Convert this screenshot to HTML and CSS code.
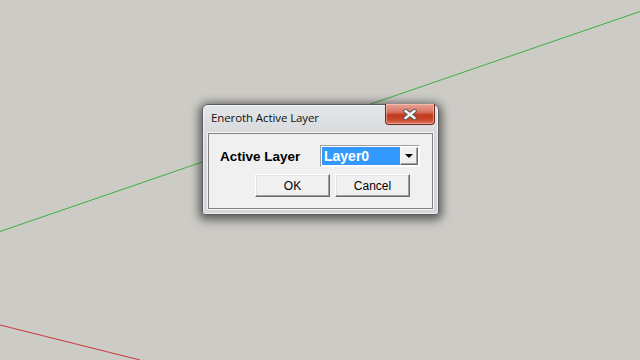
FILE: index.html
```html
<!DOCTYPE html>
<html>
<head>
<meta charset="utf-8">
<link rel="stylesheet" href="styles.css">
</head>
<body>
<div class="canvas">
  <svg class="axes" width="640" height="360" viewBox="0 0 640 360">
    <line x1="0" y1="231.5" x2="640" y2="11.5" stroke="#3fb03f" stroke-width="1"/>
    <line x1="0" y1="325" x2="140" y2="360" stroke="#c8383c" stroke-width="1"/>
  </svg>
  <div class="dialog">
    <div class="titlebar">
      <span class="title">Eneroth Active Layer</span>
      <div class="close">
        <svg width="16" height="11" viewBox="0 0 16 11">
          <path d="M3.5 2 L12.5 9 M12.5 2 L3.5 9" stroke="#505050" stroke-width="4.4" stroke-linecap="round"/>
          <path d="M3.5 2 L12.5 9 M12.5 2 L3.5 9" stroke="#f4f4f4" stroke-width="2.6" stroke-linecap="round"/>
        </svg>
      </div>
    </div>
    <div class="client">
      <div class="row">
        <span class="label">Active Layer</span>
        <div class="combo">
          <span class="combo-value">Layer0</span>
          <span class="combo-btn">
            <svg width="8" height="4" viewBox="0 0 8 4"><path d="M0 0 H8 L4 4 Z" fill="#000"/></svg>
          </span>
        </div>
      </div>
      <div class="buttons">
        <div class="btn">OK</div>
        <div class="btn">Cancel</div>
      </div>
    </div>
  </div>
</div>
</body>
</html>
```
FILE: styles.css
```css
html, body {
  margin: 0;
  padding: 0;
}
body {
  width: 640px;
  height: 360px;
  overflow: hidden;
  background: #cdcdc8;
  font-family: "Liberation Sans", Arial, sans-serif;
}
.canvas {
  position: relative;
  width: 640px;
  height: 360px;
  background: #cccbc6;
}
.axes {
  position: absolute;
  left: 0;
  top: 0;
}
.dialog {
  position: absolute;
  left: 202px;
  top: 104px;
  width: 235px;
  height: 109px;
  border: 1px solid #5a5d60;
  border-radius: 6px 6px 3px 3px;
  background: linear-gradient(#e4e6e9, #d6d8da 30%, #d4d6d8);
  box-shadow: 0 2px 10px 3px rgba(0,0,0,0.55), inset 0 0 0 1px rgba(255,255,255,0.6);
  display: flex;
  flex-direction: column;
}
.titlebar {
  height: 28px;
  display: flex;
  align-items: flex-start;
  position: relative;
}
.title {
  font-family: "Open Sans", "Noto Sans", sans-serif;
  font-size: 11.5px;
  color: #101010;
  margin-left: 8px;
  margin-top: 5px;
  letter-spacing: -0.1px;
}
.close {
  position: absolute;
  right: 3px;
  top: -1px;
  width: 50px;
  height: 21px;
  box-sizing: border-box;
  border: 1px solid #6d2a20;
  border-top: none;
  border-radius: 0 0 4px 4px;
  background: linear-gradient(#e7a497 0%, #d8735f 40%, #c0391e 55%, #c9492c 80%, #de7b5e 100%);
  box-shadow: inset 0 0 0 1px rgba(255,210,200,0.5);
  display: flex;
  align-items: center;
  justify-content: center;
}
.client {
  margin-left: 5px;
  width: 225px;
  height: 76px;
  box-sizing: border-box;
  border: 1px solid #838383;
  background: #f0f0f0;
  box-shadow: 0 0 0 1px #f4f4f4;
  display: flex;
  flex-direction: column;
}
.row {
  display: flex;
  align-items: center;
  margin-top: 11px;
  height: 22px;
}
.label {
  width: 111px;
  padding-left: 11px;
  box-sizing: border-box;
  font-weight: bold;
  font-size: 13.5px;
  color: #000;
}
.combo {
  width: 100px;
  height: 22px;
  box-sizing: border-box;
  border: 1px solid #a0a0a0;
  border-right-color: #fff;
  border-bottom-color: #fff;
  background: #fff;
  display: flex;
  padding: 1px;
}
.combo-value {
  flex: 1;
  background: #3399ff;
  color: #fff;
  font-weight: bold;
  font-size: 14px;
  line-height: 18px;
  padding-left: 2px;
}
.combo-btn {
  width: 18px;
  box-sizing: border-box;
  background: #f0f0f0;
  border: 1px solid;
  border-color: #f8f8f8 #696969 #696969 #f8f8f8;
  box-shadow: inset -1px -1px 0 #a0a0a0;
  display: flex;
  align-items: center;
  justify-content: center;
}
.buttons {
  display: flex;
  margin-left: 46px;
  margin-top: 7px;
  gap: 5px;
}
.btn {
  width: 75px;
  height: 23px;
  box-sizing: border-box;
  border: 1px solid;
  border-color: #fdfdfd #696969 #696969 #fdfdfd;
  box-shadow: inset -1px -1px 0 #a0a0a0, inset 1px 1px 0 #e3e3e3;
  background: #f0f0f0;
  font-family: "Liberation Sans", Arial, sans-serif;
  font-size: 12px;
  color: #000;
  display: flex;
  align-items: center;
  justify-content: center;
}
```
